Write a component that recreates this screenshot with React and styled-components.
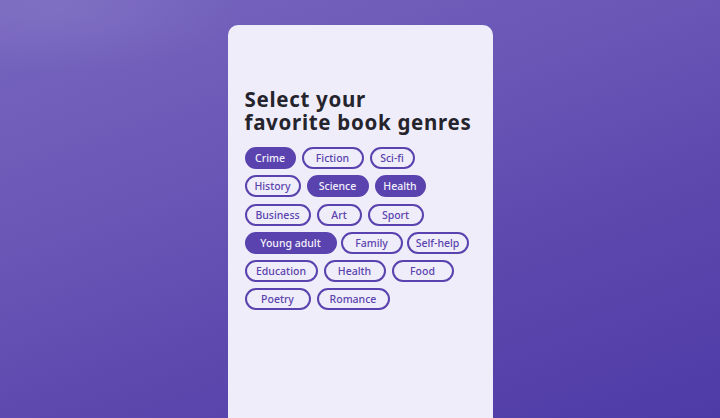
import styled, { createGlobalStyle } from 'styled-components'

const GlobalStyle = createGlobalStyle`
  html, body {
    margin: 0;
    padding: 0;
  }

  body {
    font-family: "Noto Sans", "Open Sans", sans-serif;
  }
`

const Page = styled.div`
  width: 720px;
  height: 418px;
  overflow: hidden;
  display: flex;
  justify-content: center;
  padding-top: 25px;
  box-sizing: border-box;
  background:
    radial-gradient(ellipse 260px 90px at 60px 10px, rgba(255, 255, 255, 0.07), transparent 70%),
    linear-gradient(160deg, #7767bf 0%, #6a57b6 35%, #5a46ac 70%, #4f3ba6 100%);
`

const Card = styled.div`
  width: 265px;
  height: 420px;
  background: #efedf9;
  border-radius: 10px;
  padding: 63px 17px 0;
  box-sizing: border-box;
`

const Title = styled.h1`
  margin: 0 0 14px;
  font-family: "Noto Sans", sans-serif;
  font-weight: 700;
  font-size: 20.5px;
  line-height: 22.5px;
  letter-spacing: 0.7px;
  color: #25232c;
`

const Chips = styled.div`
  display: flex;
  flex-direction: column;
  gap: 6.25px;
`

const Row = styled.div`
  display: flex;
  gap: ${p => p.$gap || 6}px;
`

const Chip = styled.button`
  width: ${p => p.$w}px;
  height: 22px;
  box-sizing: border-box;
  border-radius: 11px;
  border: 2px solid #5a43ae;
  background: ${p => (p.$active ? '#5a43ae' : 'transparent')};
  color: ${p => (p.$active ? '#f3f1fb' : '#5a43ae')};
  font-family: "Noto Sans", sans-serif;
  font-size: 10.5px;
  font-weight: 500;
  padding: 0;
  display: flex;
  align-items: center;
  justify-content: center;
  cursor: pointer;
`

const rows = [
  [
    ['Crime', 51, true],
    ['Fiction', 62],
    ['Sci-fi', 45],
  ],
  [
    ['History', 56],
    ['Science', 62, true],
    ['Health', 51, true],
  ],
  [
    ['Business', 66],
    ['Art', 45],
    ['Sport', 56],
  ],
  [
    ['Young adult', 92, true],
    ['Family', 62],
    ['Self-help', 62],
  ],
  [
    ['Education', 73],
    ['Health', 62],
    ['Food', 62],
  ],
  [
    ['Poetry', 66],
    ['Romance', 73],
  ],
]

const App = () => {
  return (
    <>
      <GlobalStyle />
      <Page>
        <Card>
          <Title>
            Select your
            <br />
            favorite book genres
          </Title>
          <Chips>
            {rows.map((row, i) => (
              <Row key={i} $gap={i === 3 ? 4 : 6}>
                {row.map(([label, w, active]) => (
                  <Chip key={label} $w={w} $active={active}>
                    {label}
                  </Chip>
                ))}
              </Row>
            ))}
          </Chips>
        </Card>
      </Page>
    </>
  )
}

export default App
